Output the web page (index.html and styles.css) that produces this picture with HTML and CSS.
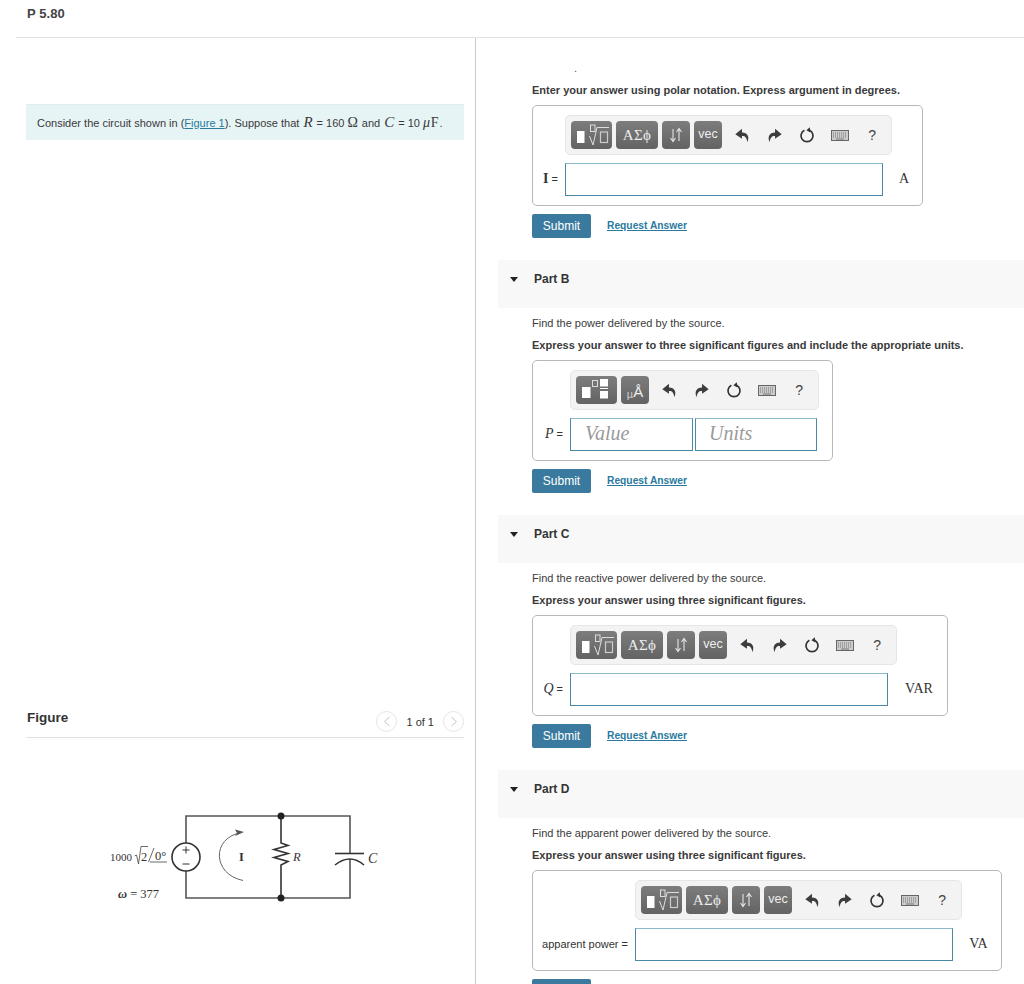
FILE: index.html
```html
<!DOCTYPE html>
<html lang="en">
<head>
    <meta charset="UTF-8">
    <title>P 5.80</title>
    <link rel="stylesheet" href="styles.css">
</head>
<body>
    <svg class="defs" width="0" height="0">
        <symbol id="undo" viewBox="0 0 14 14">
            <path d="M6.500 0.800 L0.300 5.800 L6.500 10 L6.500 7.400 C9.400 7.200 11 9 11.600 13.300 C13.600 8.200 12 4.100 6.500 4.100 Z" fill="#3d3d3d"/>
        </symbol>
        <symbol id="redo" viewBox="0 0 14 14">
            <path d="M7.500 0.800 L13.700 5.800 L7.500 10 L7.500 7.400 C4.600 7.200 3 9 2.400 13.300 C0.400 8.200 2 4.100 7.500 4.100 Z" fill="#3d3d3d"/>
        </symbol>
        <symbol id="reset" viewBox="0 0 16 16">
            <path d="M5.400 3.300 A6 6 0 1 0 10.600 3.300" fill="none" stroke="#333" stroke-width="1.700"/>
            <path d="M10.800 0.300 L7.400 3.200 L11.400 5.600 Z" fill="#333"/>
        </symbol>
        <symbol id="keys" viewBox="0 0 18 11">
            <rect x="0.500" y="0.500" width="17" height="10" fill="#ccc" stroke="#666"/>
            <path d="M2 3 H16 M2 5 H16 M2 7 H16" stroke="#777" stroke-width="1" stroke-dasharray="1 1"/>
            <path d="M5 9 H13" stroke="#777" stroke-width="1"/>
        </symbol>
        <symbol id="tpl-root" viewBox="0 0 41 28">
            <rect x="6" y="10" width="7.500" height="12" fill="#fff"/>
            <rect x="19.500" y="4" width="4.500" height="6.500" fill="none" stroke="#ddd" stroke-width="1"/>
            <path d="M18.500 15 L22 24 L26 6.500 H38" fill="none" stroke="#ddd" stroke-width="1"/>
            <rect x="29.500" y="11" width="7" height="10.500" fill="none" stroke="#ccc" stroke-width="1.200"/>
        </symbol>
        <symbol id="tpl-frac" viewBox="0 0 41 28">
            <rect x="6" y="11" width="8.500" height="11" fill="#fff"/>
            <rect x="16.500" y="4.500" width="5" height="6" fill="none" stroke="#ddd" stroke-width="1"/>
            <rect x="24" y="3" width="8" height="7.500" fill="#fff"/>
            <rect x="24" y="12" width="8" height="1" fill="#fff"/>
            <rect x="24" y="15" width="8" height="7.500" fill="#fff"/>
        </symbol>
        <symbol id="updown" viewBox="0 0 28 28">
            <path d="M11 8 V20 M8.500 17 L11 20.500 L13.500 17 M17 20 V8 M14.500 11 L17 7.500 L19.500 11" fill="none" stroke="#e4e4e4" stroke-width="1.100"/>
        </symbol>
    </svg>

    <header class="page-head">P 5.80</header>

    <div class="main">
        <div class="left">
            <div class="intro">
                Consider the circuit shown in (<a href="#">Figure 1</a>). Suppose that <span class="m">R</span> = 160 <span class="mu">&Omega;</span> and <span class="m">C</span> = 10 <span class="mu"><i>&mu;</i>F</span>.
            </div>
            <div class="figure-head">
                <span class="figure-title">Figure</span>
                <div class="pager">
                    <span class="pager-btn"><svg width="8" height="11"><path d="M6.500 1 L1.500 5.500 L6.500 10" fill="none" stroke="#c4c4c4"/></svg></span>
                    <span class="pager-text">1 of 1</span>
                    <span class="pager-btn"><svg width="8" height="11"><path d="M1.500 1 L6.500 5.500 L1.500 10" fill="none" stroke="#c4c4c4"/></svg></span>
                </div>
            </div>
            <svg class="circuit" width="300" height="110" viewBox="0 0 300 110">
                <g fill="none" stroke="#555" stroke-width="1.600">
                    <path d="M96 43 V16 H260 V53 M260 59 V98 H96 V71"/>
                    <path d="M191 16 V43 L198 45.500 L184 49.500 L198 53.500 L184 57.500 L198 61.500 L191 65 V98" stroke="#333"/>
                    <path d="M245 53.500 H274" stroke="#333"/>
                    <path d="M245 65 Q260 53 274 65" stroke="#333"/>
                </g>
                <circle cx="96" cy="57" r="14" fill="#fff" stroke="#333" stroke-width="1.600"/>
                <path d="M92.500 50 H99.500 M96 46.500 V53.500 M92.500 64 H99.500" stroke="#333" stroke-width="1"/>
                <circle cx="191" cy="16" r="3.500" fill="#222"/>
                <circle cx="191" cy="98" r="3.500" fill="#222"/>
                <path d="M153 80.500 C122 74 122 38 150 33" fill="none" stroke="#666" stroke-width="1"/>
                <path d="M154 32 L145 29.500 L147 33 L145 36 Z" fill="#555"/>
                <text class="c-text" x="20" y="61">1000</text>
                <path d="M44.500 56 L46.500 55 L48.500 64 L51 46.500 H58" fill="none" stroke="#444" stroke-width="0.800"/>
                <text class="c-text c-big" x="51" y="61">2</text>
                <path d="M58.500 62 L64 48 M60 62 H77" fill="none" stroke="#444" stroke-width="0.800"/>
                <text class="c-text c-big" x="65" y="60">0&deg;</text>
                <text class="c-text c-big" x="28" y="98"><tspan font-style="italic" font-weight="bold">&omega;</tspan> = 377</text>
                <text class="c-text c-big" x="149" y="61" font-weight="bold">I</text>
                <text class="c-text c-big" x="203" y="61" font-style="italic">R</text>
                <text class="c-text c-cap" x="278" y="63" font-style="italic">C</text>
            </svg>
        </div>

        <div class="right">
            <div class="stray">.</div>
            <p class="instr">Enter your answer using polar notation. Express argument in degrees.</p>
            <div class="answer answer-a">
                <div class="toolbar tb-a">
                    <span class="tb-btn w41"><svg width="41" height="28"><use href="#tpl-root"/></svg></span>
                    <span class="tb-btn w42 greek">&Alpha;&Sigma;&#981;</span>
                    <span class="tb-btn w28"><svg width="28" height="28"><use href="#updown"/></svg></span>
                    <span class="tb-btn w28 vec">vec</span>
                    <span class="tb-icons">
                        <svg width="15" height="15"><use href="#undo"/></svg>
                        <svg width="15" height="15"><use href="#redo"/></svg>
                        <svg width="16" height="16"><use href="#reset"/></svg>
                        <svg width="18" height="11"><use href="#keys"/></svg>
                        <span class="help">?</span>
                    </span>
                </div>
                <span class="lbl"><b class="s">I</b> =</span>
                <input class="field" type="text" aria-label="I">
                <span class="unit">A</span>
            </div>
            <div class="actions">
                <button class="submit" type="button">Submit</button>
                <a class="req" href="#">Request Answer</a>
            </div>

            <div class="part-head"><span class="tri"></span>Part B</div>
            <p class="desc">Find the power delivered by the source.</p>
            <p class="instr">Express your answer to three significant figures and include the appropriate units.</p>
            <div class="answer answer-b">
                <div class="toolbar tb-b">
                    <span class="tb-btn w41"><svg width="41" height="28"><use href="#tpl-frac"/></svg></span>
                    <span class="tb-btn w28 units"><small>&micro;</small>&Aring;</span>
                    <span class="tb-icons">
                        <svg width="15" height="15"><use href="#undo"/></svg>
                        <svg width="15" height="15"><use href="#redo"/></svg>
                        <svg width="16" height="16"><use href="#reset"/></svg>
                        <svg width="18" height="11"><use href="#keys"/></svg>
                        <span class="help">?</span>
                    </span>
                </div>
                <span class="lbl"><i class="s">P</i> =</span>
                <div class="value-units">
                    <input class="field ph" type="text" placeholder="Value">
                    <input class="field ph" type="text" placeholder="Units">
                </div>
            </div>
            <div class="actions">
                <button class="submit" type="button">Submit</button>
                <a class="req" href="#">Request Answer</a>
            </div>

            <div class="part-head"><span class="tri"></span>Part C</div>
            <p class="desc">Find the reactive power delivered by the source.</p>
            <p class="instr">Express your answer using three significant figures.</p>
            <div class="answer answer-c">
                <div class="toolbar tb-a">
                    <span class="tb-btn w41"><svg width="41" height="28"><use href="#tpl-root"/></svg></span>
                    <span class="tb-btn w42 greek">&Alpha;&Sigma;&#981;</span>
                    <span class="tb-btn w28"><svg width="28" height="28"><use href="#updown"/></svg></span>
                    <span class="tb-btn w28 vec">vec</span>
                    <span class="tb-icons">
                        <svg width="15" height="15"><use href="#undo"/></svg>
                        <svg width="15" height="15"><use href="#redo"/></svg>
                        <svg width="16" height="16"><use href="#reset"/></svg>
                        <svg width="18" height="11"><use href="#keys"/></svg>
                        <span class="help">?</span>
                    </span>
                </div>
                <span class="lbl"><i class="s">Q</i> =</span>
                <input class="field" type="text" aria-label="Q">
                <span class="unit">VAR</span>
            </div>
            <div class="actions">
                <button class="submit" type="button">Submit</button>
                <a class="req" href="#">Request Answer</a>
            </div>

            <div class="part-head"><span class="tri"></span>Part D</div>
            <p class="desc">Find the apparent power delivered by the source.</p>
            <p class="instr">Express your answer using three significant figures.</p>
            <div class="answer answer-d">
                <div class="toolbar tb-a">
                    <span class="tb-btn w41"><svg width="41" height="28"><use href="#tpl-root"/></svg></span>
                    <span class="tb-btn w42 greek">&Alpha;&Sigma;&#981;</span>
                    <span class="tb-btn w28"><svg width="28" height="28"><use href="#updown"/></svg></span>
                    <span class="tb-btn w28 vec">vec</span>
                    <span class="tb-icons">
                        <svg width="15" height="15"><use href="#undo"/></svg>
                        <svg width="15" height="15"><use href="#redo"/></svg>
                        <svg width="16" height="16"><use href="#reset"/></svg>
                        <svg width="18" height="11"><use href="#keys"/></svg>
                        <span class="help">?</span>
                    </span>
                </div>
                <span class="lbl">apparent power =</span>
                <input class="field" type="text" aria-label="apparent power">
                <span class="unit">VA</span>
            </div>
            <div class="actions">
                <button class="submit" type="button" aria-label="Submit"></button>
            </div>
        </div>
    </div>
</body>
</html>
```

FILE: styles.css
```css
html, body {
    margin: 0;
    height: 984px;
    overflow: hidden;
}
body {
    font-family: "Liberation Sans", Arial, sans-serif;
    font-size: 11px;
    color: #333;
    background-color: #fff;
}
.defs {
    display: block;
    height: 0;
}
a {
    color: #2b7a9e;
}
p {
    margin: 0;
}

.page-head {
    height: 38px;
    margin-left: 16px;
    padding: 6px 0 0 11px;
    box-sizing: border-box;
    border-bottom: 1px solid #e2e2e2;
    font-size: 13px;
    letter-spacing: 0.1px;
    line-height: 16px;
    font-weight: bold;
    color: #444;
}

.main {
    display: flex;
    margin-left: 16px;
    height: 946px;
    overflow: hidden;
}
.left {
    width: 459px;
    flex: none;
    border-right: 1px solid #c4ccd2;
}
.intro {
    margin: 66px 11px 0 10px;
    height: 36px;
    line-height: 34px;
    padding-left: 11px;
    background: #e7f4f5;
    border-top: 1px solid #e0ecee;
    box-sizing: border-box;
    color: #3a3a3a;
    white-space: nowrap;
}
.intro .m {
    margin: 0 1px;
    font-family: "Liberation Serif", serif;
    font-style: italic;
    font-size: 15px;
}
.intro .mu {
    font-family: "Liberation Serif", serif;
    font-size: 14px;
    letter-spacing: 0.8px;
}

.figure-head {
    display: flex;
    justify-content: space-between;
    align-items: center;
    margin: 568px 11px 0 10px;
    height: 30px;
    padding: 0 0 10px 1px;
    box-sizing: border-box;
    border-bottom: 1px solid #e2e2e2;
}
.figure-title {
    font-size: 13.500px;
    font-weight: bold;
    color: #333;
}
.pager {
    display: flex;
    align-items: center;
    gap: 9px;
    margin-top: 8px;
    margin-right: 0;
}
.pager-btn {
    display: flex;
    align-items: center;
    justify-content: center;
    width: 19px;
    height: 19px;
    border: 1px solid #e4e4e4;
    border-radius: 50%;
}
.pager-text {
    color: #333;
}
.circuit {
    display: block;
    margin: 62px 0 0 74px;
}
.c-text {
    font-family: "Liberation Serif", serif;
    font-size: 11px;
    fill: #333;
}
.c-big {
    font-size: 12.500px;
}
.c-cap {
    font-size: 14px;
}

.right {
    flex: 1;
    padding-left: 22px;
    min-width: 0;
}
.stray {
    margin-left: 76px;
    height: 44px;
    padding-top: 23px;
    box-sizing: border-box;
    font-size: 11px;
    line-height: 14px;
    color: #555;
}
.instr, .desc {
    margin-left: 34px;
    line-height: 16px;
    white-space: nowrap;
}
.instr {
    font-weight: bold;
    color: #3a3a3a;
}
.desc {
    margin-top: 7px;
    margin-bottom: 6px;
    color: #3a3a3a;
}

.answer {
    display: grid;
    row-gap: 8px;
    column-gap: 7px;
    align-items: center;
    margin: 7px 0 0 34px;
    padding: 9px 0 10px 9px;
    height: 101px;
    box-sizing: border-box;
    border: 1px solid #b8b8b8;
    border-radius: 5px;
}
.answer-a { width: 391px; grid-template-columns: 16px 318px 1fr; }
.answer-b { width: 301px; grid-template-columns: 21px 247px; }
.answer-c { width: 416px; grid-template-columns: 21px 318px 1fr; }
.answer-d { width: 470px; grid-template-columns: 86px 318px 1fr; }

.toolbar {
    grid-column: 2 / -1;
    display: flex;
    align-items: center;
    height: 40px;
    padding-left: 5px;
    box-sizing: border-box;
    background: #f3f3f3;
    border: 1px solid #e6e6e6;
    border-radius: 5px;
    gap: 4px;
}
.tb-a { width: 327px; }
.tb-b { width: 249px; }

.tb-btn {
    display: flex;
    align-items: center;
    justify-content: center;
    flex: none;
    height: 28px;
    border-radius: 4px;
    background: linear-gradient(#7d7d7d, #636363);
    color: #eee;
}
.w41 { width: 41px; }
.w42 { width: 42px; }
.w28 { width: 28px; }
.greek {
    font-family: "Liberation Serif", serif;
    font-size: 15px;
    letter-spacing: 0.3px;
}
.vec {
    font-size: 12.500px;
    padding-bottom: 3px;
    box-sizing: border-box;
}
.units {
    font-size: 15px;
    align-items: flex-end;
    padding-bottom: 4px;
    box-sizing: border-box;
}
.units small {
    font-size: 11px;
    color: #ccc;
}
.tb-icons {
    display: grid;
    grid-template-columns: repeat(5, 32.500px);
    justify-items: center;
    align-items: center;
}
.help {
    font-size: 14px;
    color: #444;
}

.lbl {
    margin-bottom: 2px;
    text-align: right;
    white-space: nowrap;
    font-size: 11px;
}
.lbl .s {
    font-family: "Liberation Serif", serif;
    font-size: 14px;
}
.field {
    width: 100%;
    height: 33px;
    margin: 0;
    padding: 0 14px;
    box-sizing: border-box;
    border: 1px solid #4a88a6;
    border-top-color: #8db8cb;
    background: #fff;
    outline: none;
}
.ph {
    font-family: "Liberation Serif", serif;
    font-style: italic;
    font-size: 20px;
    padding-bottom: 2px;
    color: #999;
}
.ph::placeholder {
    color: #9a9a9a;
    opacity: 1;
}
.value-units {
    display: grid;
    grid-template-columns: 123px 122px;
    column-gap: 2px;
}
.value-units .ph + .ph {
    padding-left: 13px;
}
.unit {
    margin-bottom: 2px;
    font-family: "Liberation Serif", serif;
    font-size: 14px;
    text-align: center;
    padding-right: 4px;
}

.actions {
    display: flex;
    align-items: center;
    gap: 16px;
    margin: 8px 0 0 34px;
    height: 24px;
}
.submit {
    width: 59px;
    height: 24px;
    padding: 0;
    border: none;
    border-radius: 2px;
    background-color: #3a7a9e;
    color: #fff;
    font-family: "Liberation Sans", sans-serif;
    font-size: 12px;
}
.req {
    margin-bottom: 1px;
    font-size: 10.250px;
    font-weight: bold;
}

.part-head {
    display: flex;
    align-items: center;
    margin-top: 22px;
    height: 48px;
    padding-bottom: 10px;
    box-sizing: border-box;
    background: #f8f8f8;
    font-size: 12px;
    font-weight: bold;
    color: #333;
}
.tri {
    width: 0;
    height: 0;
    margin: 0 16px 0 12px;
    border-left: 4.500px solid transparent;
    border-right: 4.500px solid transparent;
    border-top: 5px solid #222;
}
```
